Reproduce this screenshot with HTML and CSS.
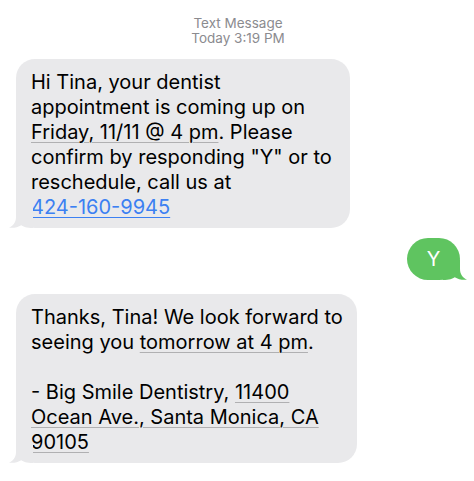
FILE: index.html
```html
<!DOCTYPE html>
<html lang="en">
<head>
<meta charset="utf-8">
<title>Text Message</title>
<link rel="stylesheet" href="styles.css">
</head>
<body>
<div class="screen">
  <header class="thread-head">
    <div class="head-line">Text Message</div>
    <div class="head-line">Today 3:19 PM</div>
  </header>
  <div class="thread">
    <div class="row row-in">
      <div class="bubble bubble-in bubble-first">
        <p class="msg">Hi Tina, your dentist<br>appointment is coming up on<br><span class="detect">Friday, 11/11 @ 4 pm</span>. Please<br>confirm by responding "Y" or to<br>reschedule, call us at<br><a class="phone" href="#">424-160-9945</a></p>
        <svg class="tail tail-in" width="24" height="20" viewBox="0 0 24 20"><path d="M7 0 L7 9 C7 14.5 4 18 0 19.6 C4.5 20.2 9 19.2 12.2 17.2 C14.5 18.8 17.5 20 24 20 L24 0 Z"/></svg>
      </div>
    </div>
    <div class="row row-out">
      <div class="bubble bubble-out">
        <span class="msg-out">Y</span>
        <svg class="tail tail-out" width="24" height="20" viewBox="0 0 24 20"><path d="M7 0 L7 9 C7 14.5 4 18 0 19.6 C4.5 20.2 9 19.2 12.2 17.2 C14.5 18.8 17.5 20 24 20 L24 0 Z"/></svg>
      </div>
    </div>
    <div class="row row-in">
      <div class="bubble bubble-in bubble-second">
        <p class="msg">Thanks, Tina! We look forward to<br>seeing you <span class="detect">tomorrow at 4 pm</span>.<br>&nbsp;<br>- Big Smile Dentistry, <span class="detect">11400</span><br><span class="detect">Ocean Ave., Santa Monica, CA</span><br><span class="detect">90105</span></p>
        <svg class="tail tail-in" width="24" height="20" viewBox="0 0 24 20"><path d="M7 0 L7 9 C7 14.5 4 18 0 19.6 C4.5 20.2 9 19.2 12.2 17.2 C14.5 18.8 17.5 20 24 20 L24 0 Z"/></svg>
      </div>
    </div>
  </div>
</div>
</body>
</html>
```
FILE: styles.css
```css
* { box-sizing: border-box; }
html, body { margin: 0; padding: 0; background: #ffffff; }
body {
  font-family: Inter, "Liberation Sans", Arial, sans-serif;
  color: #000;
  width: 474px;
  height: 481px;
  overflow: hidden;
}
.screen { padding-top: 16px; }
.thread-head {
  text-align: center;
  color: #8b8b8f;
  font-size: 13.5px;
  line-height: 15px;
  padding-left: 2px;
}
.thread {
  display: flex;
  flex-direction: column;
  margin-top: 13px;
}
.row { display: flex; }
.row-in { justify-content: flex-start; padding-left: 16px; }
.row-out { justify-content: flex-end; padding-right: 14px; margin-top: 10px; }
.row-out + .row-in { margin-top: 14px; }
.bubble { position: relative; }
.bubble-in {
  background: #e9e9eb;
  border-radius: 19px;
  padding: 11px 0 8px 15px;
}
.bubble-first { width: 334px; }
.bubble-second { width: 341px; }
.msg {
  margin: 0;
  font-size: 20px;
  line-height: 25px;
  white-space: nowrap;
}
.detect {
  text-decoration: underline;
  text-decoration-color: #b0b0b2;
  text-decoration-thickness: 1px;
  text-underline-offset: 3px;
}
.phone {
  color: #3c80f2;
  text-decoration: underline;
  text-decoration-thickness: 1px;
  text-underline-offset: 3px;
}
.bubble-out {
  background: #5fc460;
  width: 53px;
  height: 42px;
  border-radius: 21px;
  display: flex;
  align-items: center;
  justify-content: center;
}
.msg-out {
  color: #fff;
  font-size: 20px;
  line-height: 1;
}
.tail { position: absolute; bottom: 0; display: block; }
.tail-in { left: -7px; fill: #e9e9eb; }
.tail-out { right: -7px; fill: #5fc460; transform: scaleX(-1); }
```
